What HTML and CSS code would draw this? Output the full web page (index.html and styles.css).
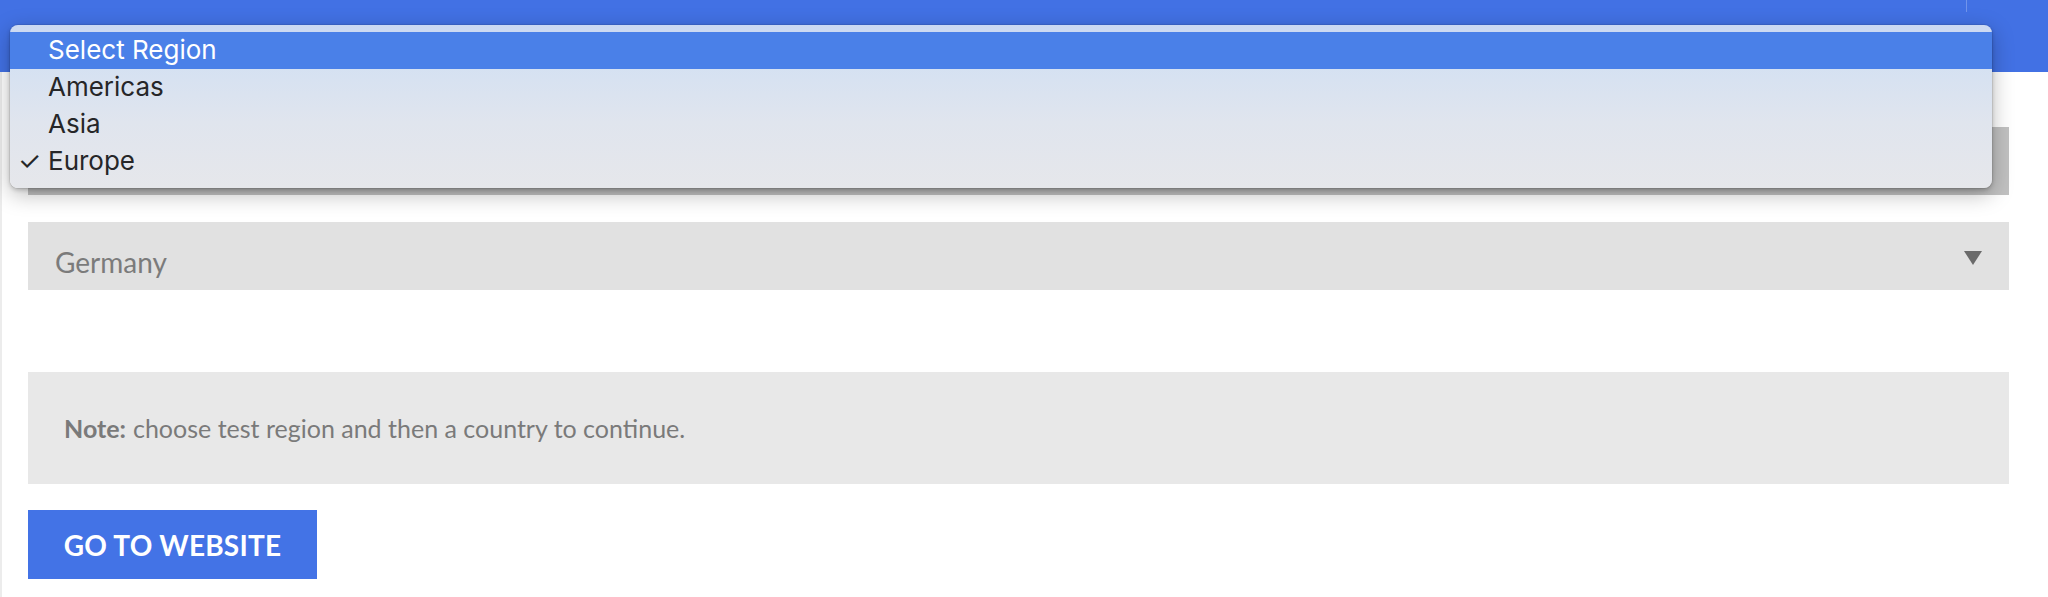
FILE: index.html
```html
<!DOCTYPE html>
<html lang="en">
<head>
<meta charset="utf-8">
<title>Select Region</title>
<link rel="stylesheet" href="styles.css">
</head>
<body>
<header class="topbar"><span class="topbar-divider"></span></header>
<main class="content">
  <div class="select select-pressed"></div>
  <div class="select">
    <span class="select-value">Germany</span>
    <span class="select-arrow"></span>
  </div>
  <div class="note"><b>Note:</b> choose test region and then a country to continue.</div>
  <button class="go-btn" type="button">GO TO WEBSITE</button>
</main>
<ul class="menu">
  <li class="menu-item is-active">Select Region</li>
  <li class="menu-item">Americas</li>
  <li class="menu-item">Asia</li>
  <li class="menu-item is-checked"><span class="check">✓</span>Europe</li>
</ul>
</body>
</html>
```
FILE: styles.css
```css
html, body {
  margin: 0;
  padding: 0;
  background: #ffffff;
}
body {
  font-family: Lato, "Open Sans", sans-serif;
  height: 597px;
  overflow: hidden;
}
.topbar {
  height: 72px;
  background: #4271e4;
  display: flex;
  justify-content: flex-end;
}
.topbar-divider {
  width: 1px;
  height: 12px;
  background: rgba(255,255,255,0.25);
  margin-right: 81px;
}
.content {
  border-left: 2px solid #ececec;
  padding: 55px 39px 40px 26px;
  display: flex;
  flex-direction: column;
  align-items: stretch;
}
.select {
  height: 68px;
  background: #e1e1e1;
  display: flex;
  align-items: center;
  justify-content: space-between;
  padding: 0 27px 0 27px;
  box-sizing: border-box;
  overflow: hidden;
}
.select-pressed {
  background: #c1c1c1;
  margin-bottom: 27px;
}
.select-value {
  font-size: 28px;
  color: #7b7b7b;
  padding-top: 12px;
}
.select-arrow {
  width: 0;
  height: 0;
  border-left: 9px solid transparent;
  border-right: 9px solid transparent;
  border-top: 14px solid #6a6a6a;
  margin-top: 4px;
}
.note {
  margin-top: 82px;
  height: 112px;
  background: #e8e8e8;
  display: flex;
  align-items: center;
  padding: 0 0 0 36px;
  font-size: 25px;
  color: #7a7a7a;
}
.note b {
  font-weight: 700;
  margin-right: 7px;
}
.go-btn {
  margin-top: 26px;
  align-self: flex-start;
  width: 289px;
  height: 69px;
  border: 0;
  background: #4373e6;
  color: #ffffff;
  font-family: Lato, sans-serif;
  font-weight: 700;
  font-size: 28px;
  letter-spacing: 0.2px;
  padding: 0;
}
.menu {
  position: absolute;
  left: 10px;
  top: 25px;
  width: 1982px;
  margin: 0;
  padding: 7px 0 8px 0;
  list-style: none;
  border-radius: 8px;
  background: linear-gradient(#cbd9f2 0%, #d5e1f2 25%, #e0e5ee 60%, #e6e7eb 100%);
  box-shadow: 0 0 0 1px rgba(0,0,0,0.06), 0 6px 22px rgba(0,0,0,0.28), 0 2px 4px rgba(0,0,0,0.2);
  font-family: Inter, "Liberation Sans", sans-serif;
  font-size: 26px;
  color: #262628;
}
.menu-item {
  height: 37px;
  line-height: 36px;
  padding-left: 38px;
  position: relative;
}
.menu-item.is-active {
  background: #4a80e8;
  color: #ffffff;
}
.check {
  position: absolute;
  left: 8px;
  font-size: 26px;
}
```
